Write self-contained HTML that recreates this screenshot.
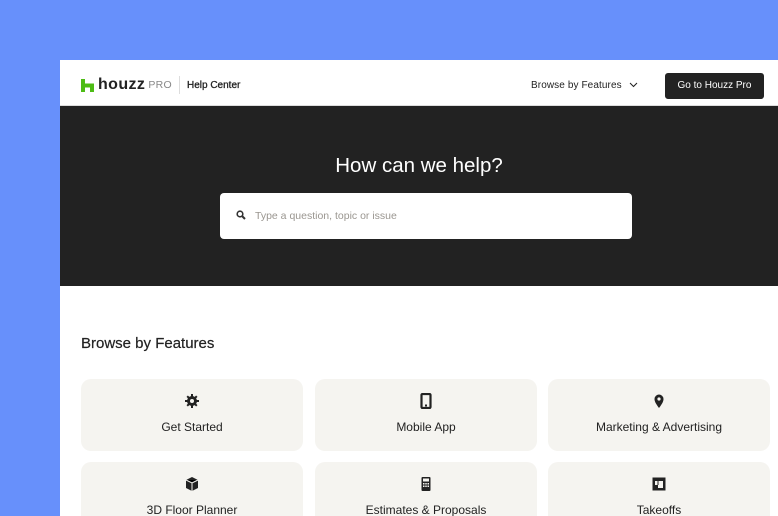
<!DOCTYPE html>
<html><head><meta charset="utf-8"><style>
*{margin:0;padding:0;box-sizing:border-box}
body{width:778px;height:516px;overflow:hidden;background:#6790fb;font-family:"Liberation Sans",sans-serif;position:relative}
.panel{position:absolute;left:60px;top:60px;width:718px;height:456px;background:#fff;overflow:hidden}
.hdr{height:46px;position:relative;border-bottom:1px solid #ddd}
.logo{position:absolute;left:21px;top:16px;display:flex;align-items:center}
.logo b{font-size:16px;font-weight:bold;color:#222;margin-left:4px;letter-spacing:.4px}
.logo span{font-size:10.5px;color:#888;margin-left:3px;letter-spacing:.3px}
.sep{width:1px;height:18px;background:#ddd;margin:0 7px}
.logo i{font-style:normal;font-size:10px;color:#222;-webkit-text-stroke:.3px #222}
.browse{position:absolute;left:471px;top:20px;font-size:10px;color:#222;letter-spacing:.1px}
.btn{position:absolute;left:605px;top:13px;width:99px;height:26px;background:#222;color:#fff;font-size:10px;border-radius:3px;text-align:center;line-height:26px}
.hero{position:absolute;top:46px;left:0;width:718px;height:180px;background:#222}
.hero h1{position:absolute;top:48px;width:100%;text-align:center;color:#fff;font-size:20.5px;font-weight:normal}
.search{position:absolute;left:160px;top:87px;width:412px;height:46px;background:#fff;border-radius:4px}
.search span{position:absolute;left:35px;top:17px;font-size:10.5px;color:#9a9690}
.search svg{position:absolute;left:16px;top:17px}
h2{position:absolute;left:21px;top:275px;font-size:15px;font-weight:normal;color:#222;-webkit-text-stroke:.2px #222}
.card{position:absolute;width:222px;height:72px;background:#f5f4f0;border-radius:10px;text-align:center}
.card svg{position:absolute;left:103px;top:14px}
.card div{position:absolute;top:41px;width:100%;font-size:12px;color:#222}
</style></head><body>
<div class="panel">
<div class="hdr">
<div class="logo"><svg width="13" height="13" viewBox="0 0 13 13"><path d="M0 0h4v4.5h9V13H9V8.5H4V13H0z" fill="#4dbc15"/></svg><b>houzz</b><span>PRO</span><div class="sep"></div><i>Help Center</i></div>
<div class="browse">Browse by Features <svg width="9" height="6" viewBox="0 0 9 6" style="margin-left:4px"><path d="M1 1l3.5 3.5L8 1" stroke="#222" fill="none"/></svg></div>
<div class="btn">Go to Houzz Pro</div>
</div>
<div class="hero"><h1>How can we help?</h1>
<div class="search"><svg width="10" height="10" viewBox="0 0 10 10"><circle cx="4" cy="4" r="2.8" stroke="#333" stroke-width="1.6" fill="none"/><path d="M6 6l3 3" stroke="#333" stroke-width="2"/></svg><span>Type a question, topic or issue</span></div></div>
<h2>Browse by Features</h2>
<div class="card" style="left:21px;top:319px"><svg width="16" height="16" viewBox="0 0 16 16"><g fill="#222"><circle cx="8" cy="8" r="5"/><path d="M7 1h2v14H7zM1 7h14v2H1z"/><path d="M2.5 3.9l1.4-1.4 9.6 9.6-1.4 1.4zM12.1 2.5l1.4 1.4-9.6 9.6-1.4-1.4z"/></g><circle cx="8" cy="8" r="2" fill="#f5f4f0"/></svg><div>Get Started</div></div>
<div class="card" style="left:255px;top:319px"><svg width="16" height="16" viewBox="0 0 16 16"><rect x="3.5" y="1" width="9" height="14" rx="1" fill="none" stroke="#222" stroke-width="2.2"/><rect x="7" y="11.5" width="2" height="2" fill="#222"/></svg><div>Mobile App</div></div>
<div class="card" style="left:488px;top:319px"><svg width="16" height="16" viewBox="0 0 16 16"><path d="M8 15C5 11 3.5 8.5 3.5 6a4.5 4.5 0 019 0c0 2.5-1.5 5-4.5 9z" fill="#222"/><circle cx="8" cy="6" r="1.6" fill="#f5f4f0"/></svg><div>Marketing &amp; Advertising</div></div>
<div class="card" style="left:21px;top:402px"><svg width="16" height="16" viewBox="0 0 16 16"><path d="M8 1l6 3v8l-6 3-6-3V4z" fill="#222"/><path d="M2 4l6 3 6-3M8 7v8" stroke="#f5f4f0" stroke-width="1"/></svg><div>3D Floor Planner</div></div>
<div class="card" style="left:255px;top:402px"><svg width="16" height="16" viewBox="0 0 16 16"><rect x="3.5" y="1" width="9" height="14" rx="1" fill="#222"/><rect x="5" y="2.5" width="6" height="3" fill="#f5f4f0"/><g fill="#f5f4f0"><rect x="5" y="7" width="1.5" height="1.5"/><rect x="7.25" y="7" width="1.5" height="1.5"/><rect x="9.5" y="7" width="1.5" height="1.5"/><rect x="5" y="9.5" width="1.5" height="1.5"/><rect x="7.25" y="9.5" width="1.5" height="1.5"/><rect x="9.5" y="9.5" width="1.5" height="1.5"/></g></svg><div>Estimates &amp; Proposals</div></div>
<div class="card" style="left:488px;top:402px"><svg width="16" height="16" viewBox="0 0 16 16"><rect x="1.5" y="1.5" width="13" height="13" fill="#222"/><path d="M7 5h5v7H7V9H4V5h3" fill="#f5f4f0"/><path d="M7 5v4" stroke="#222"/></svg><div>Takeoffs</div></div>
</div>
</body></html>
